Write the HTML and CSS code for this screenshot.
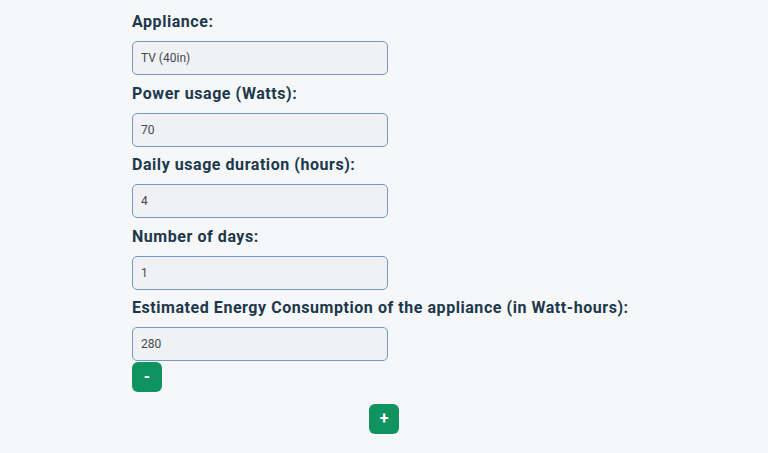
FILE: index.html
```html
<!DOCTYPE html>
<html>
<head>
<meta charset="utf-8">
<link rel="stylesheet" href="styles.css">
</head>
<body>
<div class="page">
  <form class="form">
    <div class="field">
      <label class="label">Appliance:</label>
      <input class="input" type="text" value="TV (40in)">
    </div>
    <div class="field">
      <label class="label">Power usage (Watts):</label>
      <input class="input" type="text" value="70">
    </div>
    <div class="field">
      <label class="label">Daily usage duration (hours):</label>
      <input class="input" type="text" value="4">
    </div>
    <div class="field">
      <label class="label">Number of days:</label>
      <input class="input" type="text" value="1">
    </div>
    <div class="field last">
      <label class="label">Estimated Energy Consumption of the appliance (in Watt-hours):</label>
      <input class="input" type="text" value="280">
    </div>
    <button type="button" class="btn">-</button>
  </form>
  <div class="add-row">
    <button type="button" class="btn">+</button>
  </div>
</div>
</body>
</html>
```
FILE: styles.css
```css
html, body {
  margin: 0;
  padding: 0;
  background: #f5f7f9;
  font-family: Roboto, "Liberation Sans", sans-serif;
}
.page {
  width: 768px;
  height: 453px;
  overflow: hidden;
  padding-top: 12px;
  box-sizing: border-box;
}
.form {
  margin-left: 132px;
  display: flex;
  flex-direction: column;
  align-items: flex-start;
}
.field {
  display: flex;
  flex-direction: column;
  align-items: flex-start;
  margin-bottom: 8.5px;
}
.field.last {
  margin-bottom: 1px;
}
.label {
  font-size: 16px;
  line-height: 20px;
  font-weight: 700;
  letter-spacing: 0.55px;
  color: #1d384c;
  margin-bottom: 9px;
}
.input {
  box-sizing: border-box;
  width: 256px;
  height: 34px;
  border: 1px solid #6f9bc4;
  border-radius: 5px;
  background: #eff1f4;
  padding: 0 8px;
  font-family: Roboto, "Liberation Sans", sans-serif;
  font-size: 12px;
  color: #444a50;
  outline: none;
}
.btn {
  width: 30px;
  height: 30px;
  border: none;
  border-radius: 6px;
  background: #10945f;
  color: #ffffff;
  font-family: Roboto, "Liberation Sans", sans-serif;
  font-size: 16px;
  font-weight: 700;
  padding: 0;
  line-height: 30px;
  cursor: pointer;
}
.add-row {
  display: flex;
  justify-content: center;
  margin-top: 12px;
}
```
